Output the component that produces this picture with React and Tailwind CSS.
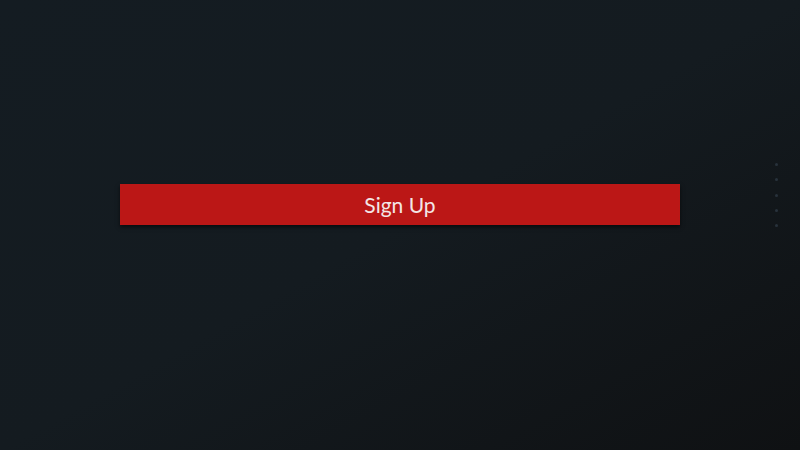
import React from 'react';

const App = () => {
  return (
    <div
      className="relative flex h-[450px] w-[800px] items-center overflow-hidden bg-gradient-to-br from-[#141c22] via-[#141b20] to-[#0f1113] px-[120px] pb-[41px]"
      style={{ fontFamily: 'Lato, "Open Sans", sans-serif' }}
    >
      <button className="flex h-[41px] w-full items-center justify-center bg-[#bb1716] text-[21px] text-[#f3e6e6] shadow-[0_2px_4px_rgba(0,0,0,0.6)]">
        Sign Up
      </button>
      <div className="absolute left-[775px] top-[163px] flex flex-col gap-[12.25px]">
        {[0, 1, 2, 3, 4].map((i) => (
          <span key={i} className="block h-[3px] w-[3px] rounded-full bg-[#28323c]" />
        ))}
      </div>
    </div>
  );
};

export default App;
